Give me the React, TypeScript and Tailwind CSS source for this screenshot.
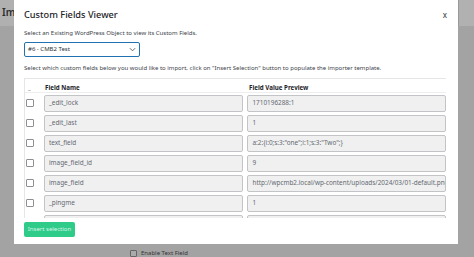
import React from "react";

const rows = [
  { name: "_edit_lock", value: "1710196288:1" },
  { name: "_edit_last", value: "1" },
  { name: "text_field", value: 'a:2:{i:0;s:3:"one";i:1;s:3:"Two";}' },
  { name: "image_field_id", value: "9" },
  { name: "image_field", value: "http://wpcmb2.local/wp-content/uploads/2024/03/01-default.png" },
  { name: "_pingme", value: "1" },
  { name: "", value: "" },
];

const App = () => {
  return (
    <div
      className="relative w-[474px] h-[257px] overflow-hidden bg-[#a3a3a3] text-[#3c434a]"
      style={{ fontFamily: '"Noto Sans", "Open Sans", sans-serif' }}
    >
      {/* page underneath */}
      <div className="absolute left-0 top-0 w-[14px] h-[26px] bg-[#b0b0b0] text-[10px] font-semibold text-[#2c2c2c] pt-[5px] pl-[2px]">
        Im
      </div>
      <div className="absolute right-0 top-0 w-[16px] h-[26px] bg-[#b1b1b1] border-l border-[#999]" />
      <div className="absolute left-[130px] top-[249px] flex items-center gap-[4px] text-[6px] text-[#333]">
        <span className="w-[7px] h-[7px] border border-[#666] rounded-[1px] bg-[#aaa]" />
        Enable Text Field
      </div>

      {/* modal */}
      <div className="absolute left-[14px] top-[-4px] w-[444px] h-[248px] bg-white pt-[12px] pl-[10px] pr-[12px]">
        <div className="flex items-center justify-between">
          <h2 className="text-[9.2px] font-medium text-[#1d2327] leading-[14px]">Custom Fields Viewer</h2>
          <span className="text-[8px] text-[#333] mr-[-1px]">x</span>
        </div>
        <p className="mt-[7px] text-[6px] leading-[9px]">
          Select an Existing WordPress Object to view its Custom Fields.
        </p>
        <div className="mt-[4px] w-[116px] h-[15px] border border-[#2271b1] rounded-[2px] flex items-center justify-between px-[3px] text-[6px] text-[#2c3338]">
          #6 - CMB2 Test
          <svg width="7" height="5" viewBox="0 0 8 5">
            <path d="M1 1l3 3 3-3" fill="none" stroke="#555" strokeWidth="1" />
          </svg>
        </div>
        <p className="mt-[7px] text-[6px] leading-[9px]">
          Select which custom fields below you would like to import, click on "Insert Selection" button to populate the importer template.
        </p>
        <div className="mt-[5px] h-[140px] overflow-hidden border-t border-l border-[#e6e6e6]">
          <div className="flex items-end h-[13px] text-[6.2px] font-bold text-[#1d2327]">
            <span className="w-[20px] pl-[3px] font-normal text-[#888]">_</span>
            <span className="w-[203px]">Field Name</span>
            <span className="pl-[1px]">Field Value Preview</span>
          </div>
          <div className="flex flex-col gap-[2px] border-t border-[#eee] pt-[1px]">
            {rows.map((r, i) => (
              <div key={i} className="flex items-center h-[18px]">
                <span className="w-[19px] flex justify-start pl-[1px]">
                  <span className="w-[8px] h-[8px] border border-[#8c8f94] rounded-[1px] bg-white" />
                </span>
                <div className="w-[200px] h-[17px] rounded-[2px] border border-[#c3c4c7] bg-[#f0f0f1] text-[6.4px] flex items-center px-[4px] text-[#646970]">
                  {r.name}
                </div>
                <div className="ml-[4px] w-[199px] h-[17px] rounded-[2px] border border-[#c3c4c7] bg-[#f0f0f1] text-[6.4px] flex items-center px-[4px] text-[#646970] overflow-hidden whitespace-nowrap">
                  {r.value}
                </div>
              </div>
            ))}
          </div>
        </div>
        <button className="mt-[4px] w-[51px] h-[15px] rounded-[2px] bg-[#2ecb89] text-[6px] text-[#d8f5e8] flex items-center justify-center">
          Insert selection
        </button>
      </div>
    </div>
  );
};

export default App;
